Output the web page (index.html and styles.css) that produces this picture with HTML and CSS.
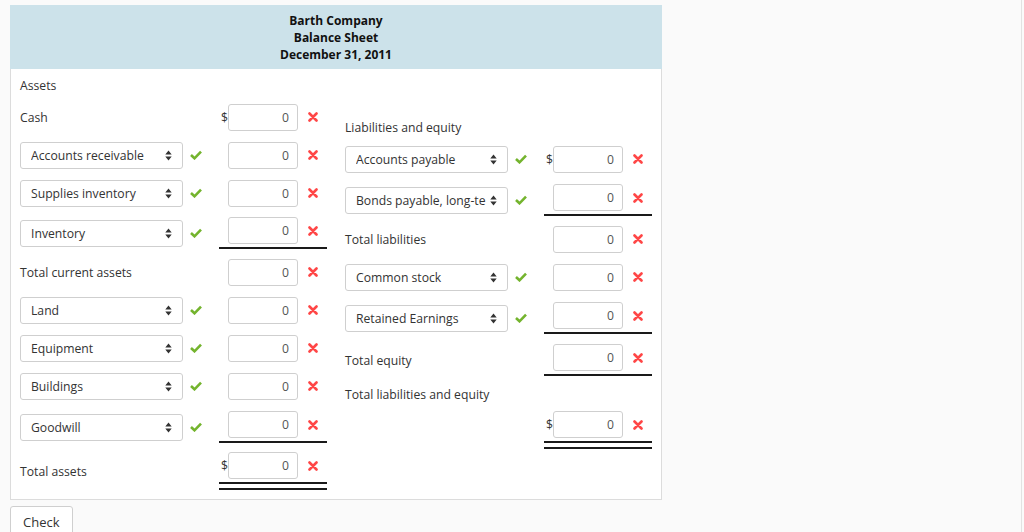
FILE: index.html
```html
<!DOCTYPE html>
<html>
<head>
<meta charset="utf-8">
<link rel="stylesheet" href="styles.css">
</head>
<body>
<div class="page">
  <div class="panel">
    <div class="hdr">
      <div>Barth Company</div>
      <div>Balance Sheet</div>
      <div>December 31, 2011</div>
    </div>
    <div class="body">
      <div class="col">
        <div class="sec sec-left">Assets</div>

        <div class="row">
          <div class="lab">Cash</div><div class="ok"></div>
          <div class="amt"><div class="line"><span class="dol">$</span><div class="inp">0</div><svg class="no" width="10" height="10" viewBox="0 0 10 10"><path d="M1.5 1.5 L8.5 8.5 M8.5 1.5 L1.5 8.5" stroke="#ff4646" stroke-width="2.6" stroke-linecap="round"/></svg></div></div>
        </div>

        <div class="row">
          <div class="lab"><div class="sel"><span>Accounts receivable</span><svg width="7" height="11" viewBox="0 0 7 11"><path d="M0.3 4.6 L3.5 0.6 L6.7 4.6Z M0.3 6.4 L6.7 6.4 L3.5 10.4Z" fill="#333"/></svg></div></div>
          <div class="ok"><svg width="12" height="10" viewBox="0 0 12 10"><path d="M1 5 L4.5 8.3 L11 1.6" fill="none" stroke="#74b42e" stroke-width="2.6"/></svg></div>
          <div class="amt"><div class="line"><span class="dol"></span><div class="inp">0</div><svg class="no" width="10" height="10" viewBox="0 0 10 10"><path d="M1.5 1.5 L8.5 8.5 M8.5 1.5 L1.5 8.5" stroke="#ff4646" stroke-width="2.6" stroke-linecap="round"/></svg></div></div>
        </div>

        <div class="row">
          <div class="lab"><div class="sel"><span>Supplies inventory</span><svg width="7" height="11" viewBox="0 0 7 11"><path d="M0.3 4.6 L3.5 0.6 L6.7 4.6Z M0.3 6.4 L6.7 6.4 L3.5 10.4Z" fill="#333"/></svg></div></div>
          <div class="ok"><svg width="12" height="10" viewBox="0 0 12 10"><path d="M1 5 L4.5 8.3 L11 1.6" fill="none" stroke="#74b42e" stroke-width="2.6"/></svg></div>
          <div class="amt"><div class="line"><span class="dol"></span><div class="inp">0</div><svg class="no" width="10" height="10" viewBox="0 0 10 10"><path d="M1.5 1.5 L8.5 8.5 M8.5 1.5 L1.5 8.5" stroke="#ff4646" stroke-width="2.6" stroke-linecap="round"/></svg></div></div>
        </div>

        <div class="row m2">
          <div class="lab"><div class="sel"><span>Inventory</span><svg width="7" height="11" viewBox="0 0 7 11"><path d="M0.3 4.6 L3.5 0.6 L6.7 4.6Z M0.3 6.4 L6.7 6.4 L3.5 10.4Z" fill="#333"/></svg></div></div>
          <div class="ok"><svg width="12" height="10" viewBox="0 0 12 10"><path d="M1 5 L4.5 8.3 L11 1.6" fill="none" stroke="#74b42e" stroke-width="2.6"/></svg></div>
          <div class="amt u"><div class="line"><span class="dol"></span><div class="inp">0</div><svg class="no" width="10" height="10" viewBox="0 0 10 10"><path d="M1.5 1.5 L8.5 8.5 M8.5 1.5 L1.5 8.5" stroke="#ff4646" stroke-width="2.6" stroke-linecap="round"/></svg></div></div>
        </div>

        <div class="row m1">
          <div class="lab">Total current assets</div><div class="ok"></div>
          <div class="amt"><div class="line"><span class="dol"></span><div class="inp">0</div><svg class="no" width="10" height="10" viewBox="0 0 10 10"><path d="M1.5 1.5 L8.5 8.5 M8.5 1.5 L1.5 8.5" stroke="#ff4646" stroke-width="2.6" stroke-linecap="round"/></svg></div></div>
        </div>

        <div class="row">
          <div class="lab"><div class="sel"><span>Land</span><svg width="7" height="11" viewBox="0 0 7 11"><path d="M0.3 4.6 L3.5 0.6 L6.7 4.6Z M0.3 6.4 L6.7 6.4 L3.5 10.4Z" fill="#333"/></svg></div></div>
          <div class="ok"><svg width="12" height="10" viewBox="0 0 12 10"><path d="M1 5 L4.5 8.3 L11 1.6" fill="none" stroke="#74b42e" stroke-width="2.6"/></svg></div>
          <div class="amt"><div class="line"><span class="dol"></span><div class="inp">0</div><svg class="no" width="10" height="10" viewBox="0 0 10 10"><path d="M1.5 1.5 L8.5 8.5 M8.5 1.5 L1.5 8.5" stroke="#ff4646" stroke-width="2.6" stroke-linecap="round"/></svg></div></div>
        </div>

        <div class="row">
          <div class="lab"><div class="sel"><span>Equipment</span><svg width="7" height="11" viewBox="0 0 7 11"><path d="M0.3 4.6 L3.5 0.6 L6.7 4.6Z M0.3 6.4 L6.7 6.4 L3.5 10.4Z" fill="#333"/></svg></div></div>
          <div class="ok"><svg width="12" height="10" viewBox="0 0 12 10"><path d="M1 5 L4.5 8.3 L11 1.6" fill="none" stroke="#74b42e" stroke-width="2.6"/></svg></div>
          <div class="amt"><div class="line"><span class="dol"></span><div class="inp">0</div><svg class="no" width="10" height="10" viewBox="0 0 10 10"><path d="M1.5 1.5 L8.5 8.5 M8.5 1.5 L1.5 8.5" stroke="#ff4646" stroke-width="2.6" stroke-linecap="round"/></svg></div></div>
        </div>

        <div class="row">
          <div class="lab"><div class="sel"><span>Buildings</span><svg width="7" height="11" viewBox="0 0 7 11"><path d="M0.3 4.6 L3.5 0.6 L6.7 4.6Z M0.3 6.4 L6.7 6.4 L3.5 10.4Z" fill="#333"/></svg></div></div>
          <div class="ok"><svg width="12" height="10" viewBox="0 0 12 10"><path d="M1 5 L4.5 8.3 L11 1.6" fill="none" stroke="#74b42e" stroke-width="2.6"/></svg></div>
          <div class="amt"><div class="line"><span class="dol"></span><div class="inp">0</div><svg class="no" width="10" height="10" viewBox="0 0 10 10"><path d="M1.5 1.5 L8.5 8.5 M8.5 1.5 L1.5 8.5" stroke="#ff4646" stroke-width="2.6" stroke-linecap="round"/></svg></div></div>
        </div>

        <div class="row m3">
          <div class="lab"><div class="sel"><span>Goodwill</span><svg width="7" height="11" viewBox="0 0 7 11"><path d="M0.3 4.6 L3.5 0.6 L6.7 4.6Z M0.3 6.4 L6.7 6.4 L3.5 10.4Z" fill="#333"/></svg></div></div>
          <div class="ok"><svg width="12" height="10" viewBox="0 0 12 10"><path d="M1 5 L4.5 8.3 L11 1.6" fill="none" stroke="#74b42e" stroke-width="2.6"/></svg></div>
          <div class="amt u"><div class="line"><span class="dol"></span><div class="inp">0</div><svg class="no" width="10" height="10" viewBox="0 0 10 10"><path d="M1.5 1.5 L8.5 8.5 M8.5 1.5 L1.5 8.5" stroke="#ff4646" stroke-width="2.6" stroke-linecap="round"/></svg></div></div>
        </div>

        <div class="row m6">
          <div class="lab">Total assets</div><div class="ok"></div>
          <div class="amt dbl"><div class="line"><span class="dol">$</span><div class="inp">0</div><svg class="no" width="10" height="10" viewBox="0 0 10 10"><path d="M1.5 1.5 L8.5 8.5 M8.5 1.5 L1.5 8.5" stroke="#ff4646" stroke-width="2.6" stroke-linecap="round"/></svg></div></div>
        </div>
      </div>

      <div class="col">
        <div class="sec sec-right">Liabilities and equity</div>

        <div class="row">
          <div class="lab"><div class="sel"><span>Accounts payable</span><svg width="7" height="11" viewBox="0 0 7 11"><path d="M0.3 4.6 L3.5 0.6 L6.7 4.6Z M0.3 6.4 L6.7 6.4 L3.5 10.4Z" fill="#333"/></svg></div></div>
          <div class="ok"><svg width="12" height="10" viewBox="0 0 12 10"><path d="M1 5 L4.5 8.3 L11 1.6" fill="none" stroke="#74b42e" stroke-width="2.6"/></svg></div>
          <div class="amt"><div class="line"><span class="dol">$</span><div class="inp">0</div><svg class="no" width="10" height="10" viewBox="0 0 10 10"><path d="M1.5 1.5 L8.5 8.5 M8.5 1.5 L1.5 8.5" stroke="#ff4646" stroke-width="2.6" stroke-linecap="round"/></svg></div></div>
        </div>

        <div class="row m3">
          <div class="lab"><div class="sel"><span>Bonds payable, long-te</span><svg width="7" height="11" viewBox="0 0 7 11"><path d="M0.3 4.6 L3.5 0.6 L6.7 4.6Z M0.3 6.4 L6.7 6.4 L3.5 10.4Z" fill="#333"/></svg></div></div>
          <div class="ok"><svg width="12" height="10" viewBox="0 0 12 10"><path d="M1 5 L4.5 8.3 L11 1.6" fill="none" stroke="#74b42e" stroke-width="2.6"/></svg></div>
          <div class="amt u"><div class="line"><span class="dol"></span><div class="inp">0</div><svg class="no" width="10" height="10" viewBox="0 0 10 10"><path d="M1.5 1.5 L8.5 8.5 M8.5 1.5 L1.5 8.5" stroke="#ff4646" stroke-width="2.6" stroke-linecap="round"/></svg></div></div>
        </div>

        <div class="row m1">
          <div class="lab">Total liabilities</div><div class="ok"></div>
          <div class="amt"><div class="line"><span class="dol"></span><div class="inp">0</div><svg class="no" width="10" height="10" viewBox="0 0 10 10"><path d="M1.5 1.5 L8.5 8.5 M8.5 1.5 L1.5 8.5" stroke="#ff4646" stroke-width="2.6" stroke-linecap="round"/></svg></div></div>
        </div>

        <div class="row">
          <div class="lab"><div class="sel"><span>Common stock</span><svg width="7" height="11" viewBox="0 0 7 11"><path d="M0.3 4.6 L3.5 0.6 L6.7 4.6Z M0.3 6.4 L6.7 6.4 L3.5 10.4Z" fill="#333"/></svg></div></div>
          <div class="ok"><svg width="12" height="10" viewBox="0 0 12 10"><path d="M1 5 L4.5 8.3 L11 1.6" fill="none" stroke="#74b42e" stroke-width="2.6"/></svg></div>
          <div class="amt"><div class="line"><span class="dol"></span><div class="inp">0</div><svg class="no" width="10" height="10" viewBox="0 0 10 10"><path d="M1.5 1.5 L8.5 8.5 M8.5 1.5 L1.5 8.5" stroke="#ff4646" stroke-width="2.6" stroke-linecap="round"/></svg></div></div>
        </div>

        <div class="row m3">
          <div class="lab"><div class="sel"><span>Retained Earnings</span><svg width="7" height="11" viewBox="0 0 7 11"><path d="M0.3 4.6 L3.5 0.6 L6.7 4.6Z M0.3 6.4 L6.7 6.4 L3.5 10.4Z" fill="#333"/></svg></div></div>
          <div class="ok"><svg width="12" height="10" viewBox="0 0 12 10"><path d="M1 5 L4.5 8.3 L11 1.6" fill="none" stroke="#74b42e" stroke-width="2.6"/></svg></div>
          <div class="amt u"><div class="line"><span class="dol"></span><div class="inp">0</div><svg class="no" width="10" height="10" viewBox="0 0 10 10"><path d="M1.5 1.5 L8.5 8.5 M8.5 1.5 L1.5 8.5" stroke="#ff4646" stroke-width="2.6" stroke-linecap="round"/></svg></div></div>
        </div>

        <div class="row m4">
          <div class="lab">Total equity</div><div class="ok"></div>
          <div class="amt u"><div class="line"><span class="dol"></span><div class="inp">0</div><svg class="no" width="10" height="10" viewBox="0 0 10 10"><path d="M1.5 1.5 L8.5 8.5 M8.5 1.5 L1.5 8.5" stroke="#ff4646" stroke-width="2.6" stroke-linecap="round"/></svg></div></div>
        </div>

        <div class="row r30">
          <div class="lab wide">Total liabilities and equity</div>
        </div>

        <div class="row m2">
          <div class="lab"></div><div class="ok"></div>
          <div class="amt dbl"><div class="line"><span class="dol">$</span><div class="inp">0</div><svg class="no" width="10" height="10" viewBox="0 0 10 10"><path d="M1.5 1.5 L8.5 8.5 M8.5 1.5 L1.5 8.5" stroke="#ff4646" stroke-width="2.6" stroke-linecap="round"/></svg></div></div>
        </div>
      </div>
    </div>
  </div>
  <div class="btn">Check</div>
</div>
</body>
</html>
```

FILE: styles.css
```css
html, body {
  margin: 0;
  padding: 0;
}
body {
  background: #fafafa;
  font-family: "Open Sans", "DejaVu Sans", sans-serif;
  font-size: 12.2px;
  color: #333;
}
.page {
  width: 1022px;
  height: 532px;
  box-sizing: border-box;
  border-right: 1px solid #e2e2e2;
  padding: 5px 0 0 10px;
  overflow: hidden;
}
.panel {
  width: 652px;
}
.hdr {
  background: #cce2ea;
  text-align: center;
  font-weight: 700;
  font-size: 12px;
  line-height: 17px;
  padding: 7px 0 6px;
  color: #111;
}
.body {
  background: #fff;
  border: 1px solid #dcdcdc;
  border-top: none;
  padding: 0 9px 9px;
  display: flex;
  gap: 18px;
}
.col {
  width: 307px;
}
.sec {
  line-height: 18px;
  margin-bottom: 3px;
}
.sec-left {
  padding-top: 8px;
}
.sec-right {
  padding-top: 50px;
}
.row {
  display: flex;
  align-items: center;
  height: 38px;
}
.m1 { margin-top: 1px; }
.m2 { margin-top: 2px; }
.m3 { margin-top: 3px; }
.m4 { margin-top: 4px; }
.m6 { margin-top: 6px; }
.r30 { height: 30px; }
.lab {
  width: 163px;
  flex: none;
  white-space: nowrap;
}
.lab.wide {
  width: 300px;
}
.sel {
  width: 163px;
  height: 27px;
  box-sizing: border-box;
  border: 1px solid #cfcfcf;
  border-radius: 3px;
  background: #fff;
  display: flex;
  align-items: center;
  padding: 0 10px 0 10px;
}
.sel span {
  flex: 1;
  overflow: hidden;
  white-space: nowrap;
}
.sel svg {
  flex: none;
  margin-left: 4px;
}
.ok {
  width: 36px;
  flex: none;
  display: flex;
  align-items: center;
  padding-left: 7px;
  box-sizing: border-box;
}
.amt {
  width: 108px;
  flex: none;
}
.amt.u {
  padding-bottom: 3px;
  border-bottom: 2px solid #1a1a1a;
}
.amt.dbl {
  padding-bottom: 0;
}
.amt.dbl::after {
  content: "";
  display: block;
  margin-top: 3px;
  height: 4px;
  border-top: 2px solid #1a1a1a;
  border-bottom: 2px solid #1a1a1a;
}
.line {
  display: flex;
  align-items: center;
  height: 27px;
}
.dol {
  width: 9px;
  flex: none;
  text-align: right;
  color: #333;
}
.inp {
  width: 70px;
  height: 27px;
  flex: none;
  box-sizing: border-box;
  border: 1px solid #cfcfcf;
  border-radius: 3px;
  background: #fff;
  text-align: right;
  padding-right: 8px;
  line-height: 25px;
  color: #555;
}
.no {
  margin-left: 10px;
  flex: none;
}
.btn {
  display: inline-block;
  margin-top: 6px;
  border: 1px solid #cfcfcf;
  border-radius: 3px;
  background: #fff;
  padding: 6px 12px;
  line-height: 18px;
  font-size: 13px;
  color: #333;
}
```
